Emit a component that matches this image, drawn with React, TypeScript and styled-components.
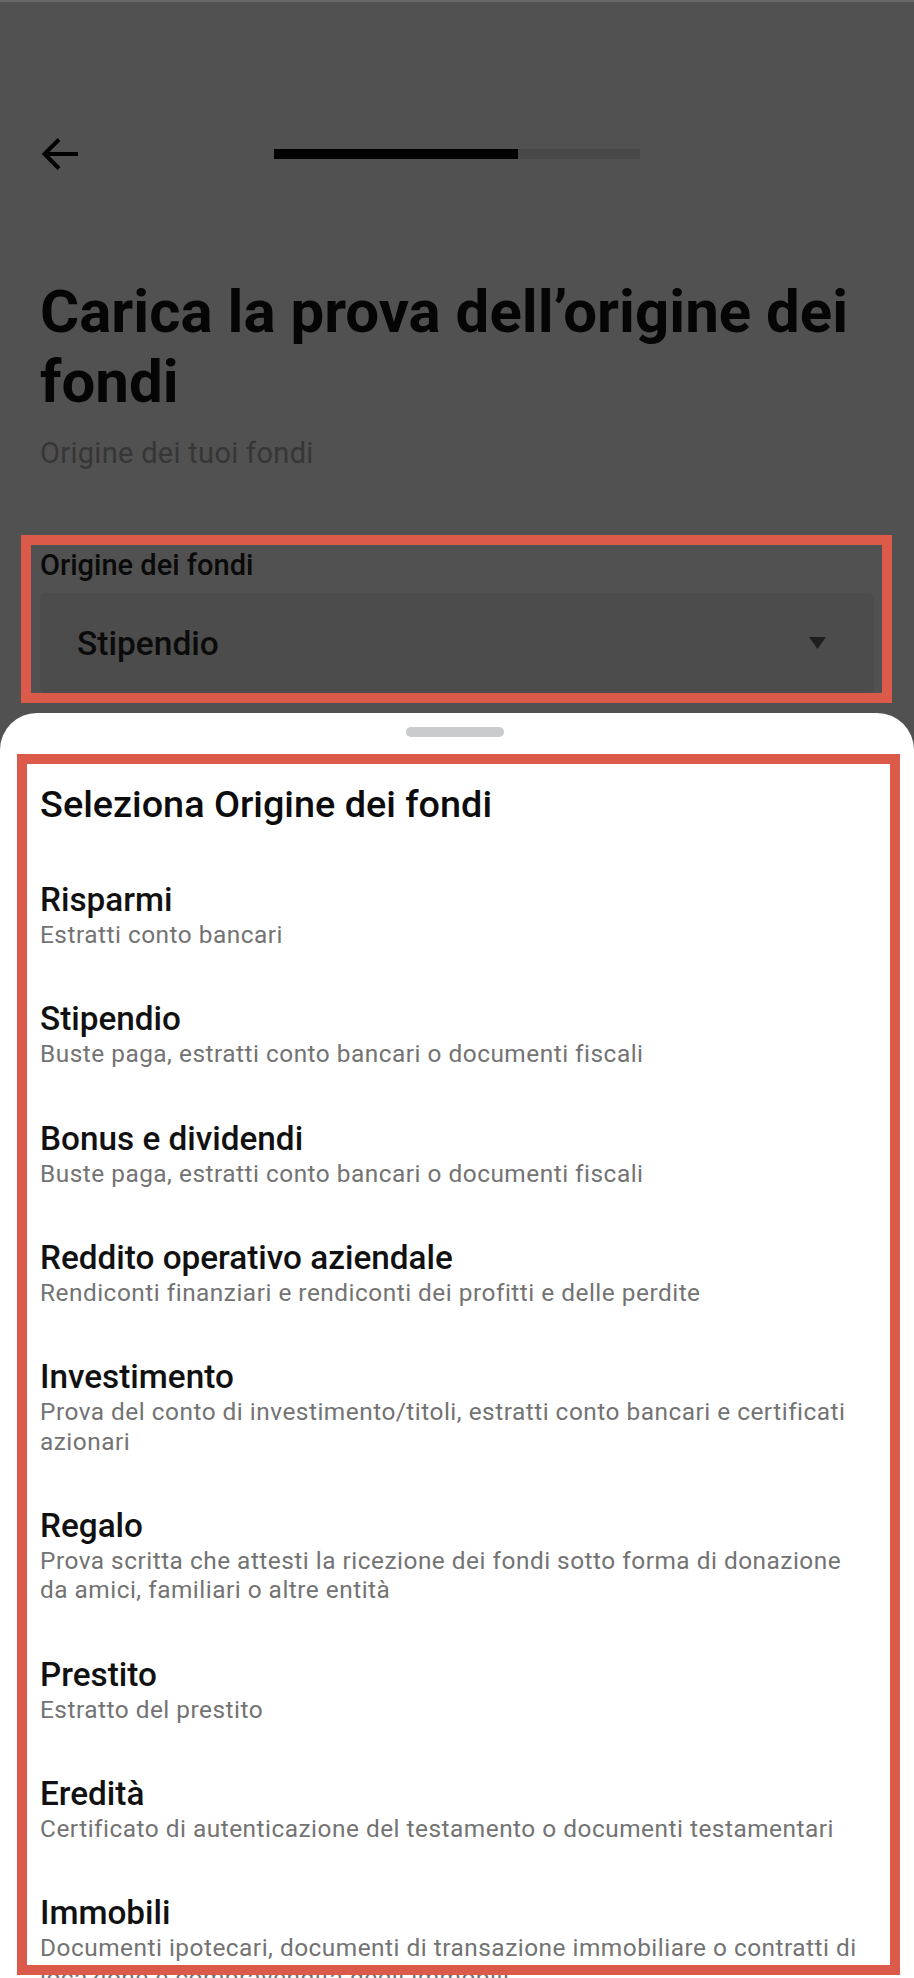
import React from "react";
import styled, { createGlobalStyle } from "styled-components";

const Global = createGlobalStyle`
  html, body { margin: 0; padding: 0; background: #515151; }
  body { font-family: Roboto, "Noto Sans", "Liberation Sans", sans-serif; overflow: hidden; }
  * { box-sizing: border-box; }
`;

const Screen = styled.div`
  position: relative;
  width: 914px;
  height: 1978px;
  overflow: hidden;
  background: #515151;
  border-top: 2px solid #686868;
  display: flex;
  flex-direction: column;
`;

const Page = styled.div`
  padding: 122px 40px 0;
  display: flex;
  flex-direction: column;
`;

const TopBar = styled.div`
  margin: 0 -40px;
  height: 60px;
  display: grid;
  grid-template-columns: 1fr 366px 1fr;
  align-items: center;
`;

const BackButton = styled.button`
  margin-left: 40px;
  width: 40px;
  height: 34px;
  padding: 0;
  border: 0;
  background: none;
  display: flex;
`;

const Track = styled.div`
  height: 10px;
  background: #484848;
  display: flex;
`;

const Fill = styled.div`
  height: 100%;
  background: #020202;
`;

const Title = styled.h1`
  margin: 93px 0 0;
  font-size: 60px;
  line-height: 70px;
  font-weight: 700;
  color: #050505;
`;

const Subtitle = styled.p`
  margin: 19px 0 0;
  font-size: 29px;
  line-height: 34px;
  letter-spacing: 0.3px;
  color: #363636;
`;

const Field = styled.div`
  margin-top: 78px;
  display: flex;
  flex-direction: column;
  gap: 11px;
`;

const FieldLabel = styled.div`
  font-size: 29px;
  line-height: 34px;
  font-weight: 500;
  color: #0a0a0a;
`;

const Select = styled.div`
  height: 100px;
  border-radius: 6px;
  background: #4c4c4c;
  padding: 0 48px 0 37px;
  display: flex;
  align-items: center;
  justify-content: space-between;
`;

const SelectValue = styled.span`
  font-size: 33.5px;
  font-weight: 500;
  color: #0b0b0b;
`;

const Caret = styled.svg`
  width: 17px;
  height: 12px;
`;

const Sheet = styled.div`
  flex: 1;
  margin-top: 20px;
  background: #ffffff;
  border-radius: 37px 37px 0 0;
  padding: 14px 44px 0 40px;
  display: flex;
  flex-direction: column;
`;

const Handle = styled.div`
  align-self: center;
  width: 98px;
  height: 10px;
  border-radius: 5px;
  background: #c9cbcd;
`;

const SheetTitle = styled.h2`
  margin: 45px 0 0;
  font-size: 37.8px;
  line-height: 44px;
  font-weight: 500;
  color: #0c0c0c;
`;

const OptionList = styled.ul`
  list-style: none;
  margin: 55px 0 0;
  padding: 0;
  display: flex;
  flex-direction: column;
  gap: 50.8px;
`;

const Option = styled.li`
  display: flex;
  flex-direction: column;
`;

const OptionName = styled.div`
  font-size: 33.3px;
  line-height: 38px;
  font-weight: 500;
  color: #111111;
`;

const OptionHint = styled.div`
  margin-top: 1px;
  font-size: 24.4px;
  line-height: 29.5px;
  letter-spacing: 0.5px;
  color: #737373;
`;

const Highlight = styled.div<{ $left: number; $top: number; $width: number; $height: number }>`
  position: absolute;
  left: ${(p) => p.$left}px;
  top: ${(p) => p.$top}px;
  width: ${(p) => p.$width}px;
  height: ${(p) => p.$height}px;
  border: 10px solid #db5a4a;
  pointer-events: none;
`;

const options = [
  { name: "Risparmi", hint: "Estratti conto bancari" },
  { name: "Stipendio", hint: "Buste paga, estratti conto bancari o documenti fiscali" },
  { name: "Bonus e dividendi", hint: "Buste paga, estratti conto bancari o documenti fiscali" },
  {
    name: "Reddito operativo aziendale",
    hint: "Rendiconti finanziari e rendiconti dei profitti e delle perdite",
  },
  {
    name: "Investimento",
    hint: "Prova del conto di investimento/titoli, estratti conto bancari e certificati azionari",
  },
  {
    name: "Regalo",
    hint: "Prova scritta che attesti la ricezione dei fondi sotto forma di donazione da amici, familiari o altre entità",
  },
  { name: "Prestito", hint: "Estratto del prestito" },
  {
    name: "Eredità",
    hint: "Certificato di autenticazione del testamento o documenti testamentari",
  },
  {
    name: "Immobili",
    hint: "Documenti ipotecari, documenti di transazione immobiliare o contratti di locazione e compravendita degli immobili",
  },
];

export default function App() {
  const progress = 244 / 366;
  return (
    <>
      <Global />
      <Screen>
        <Page>
          <TopBar>
            <BackButton aria-label="Indietro">
              <svg width="40" height="34" viewBox="0 0 40 34" fill="none">
                <path d="M38 17H5" stroke="#000" strokeWidth="4" />
                <path d="M19 2.5L4.5 17L19 31.5" stroke="#000" strokeWidth="4" />
              </svg>
            </BackButton>
            <Track>
              <Fill style={{ width: `${progress * 100}%` }} />
            </Track>
            <div />
          </TopBar>
          <Title>Carica la prova dell’origine dei fondi</Title>
          <Subtitle>Origine dei tuoi fondi</Subtitle>
          <Field>
            <FieldLabel>Origine dei fondi</FieldLabel>
            <Select>
              <SelectValue>Stipendio</SelectValue>
              <Caret viewBox="0 0 17 12">
                <path d="M0 0H17L8.5 12Z" fill="#1e1e1e" />
              </Caret>
            </Select>
          </Field>
        </Page>
        <Sheet>
          <Handle />
          <SheetTitle>Seleziona Origine dei fondi</SheetTitle>
          <OptionList>
            {options.map((o) => (
              <Option key={o.name}>
                <OptionName>{o.name}</OptionName>
                <OptionHint>{o.hint}</OptionHint>
              </Option>
            ))}
          </OptionList>
        </Sheet>
        <Highlight $left={21} $top={533} $width={871} $height={168} />
        <Highlight $left={17} $top={752} $width={883} $height={1221} />
      </Screen>
    </>
  );
}
